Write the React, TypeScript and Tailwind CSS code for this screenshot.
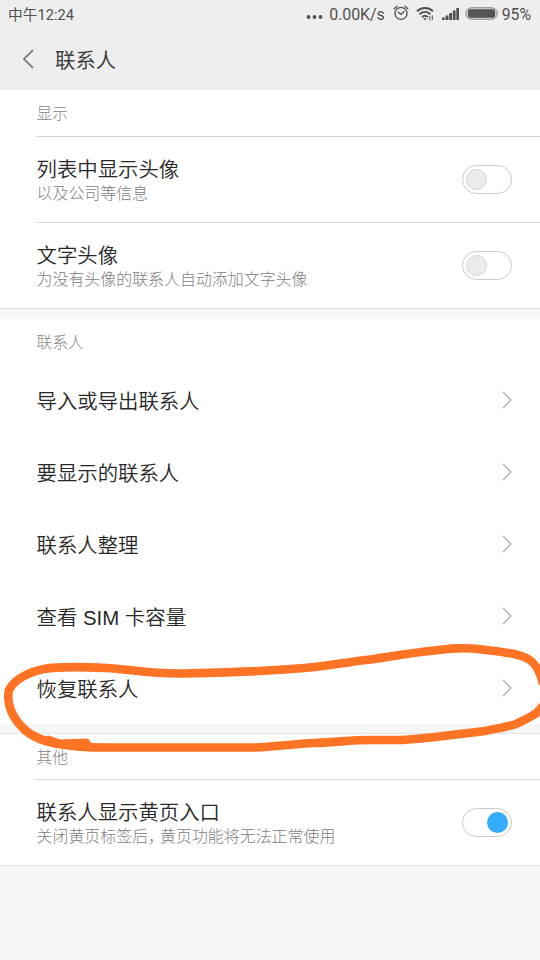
import { useState } from 'react';

const NAV_ITEMS = ['导入或导出联系人', '要显示的联系人', '联系人整理', '查看 SIM 卡容量', '恢复联系人'];

function StatusBar() {
  return (
    <div className="flex h-7 items-center justify-between pl-2 pr-[9px] text-[#505050]">
      <span className="pt-[2px] text-[14.7px] leading-7">中午12:24</span>
      <div className="flex items-center leading-7">
        <svg width="17" height="6" viewBox="0 0 17 6" className="mr-[6px] mt-[6px]" fill="currentColor">
          <circle cx="2.5" cy="3" r="1.9" />
          <circle cx="8.5" cy="3" r="1.9" />
          <circle cx="14.5" cy="3" r="1.9" />
        </svg>
        <span className="pt-[2px] text-[16px] tracking-[-0.1px]">0.00K/s</span>
        {/* Alarm */}
        <svg width="16" height="16" viewBox="0 0 16 16" className="ml-2 -mt-[2px]" fill="none" stroke="currentColor" strokeWidth="1.3" strokeLinecap="round">
          <circle cx="8" cy="8.4" r="6" />
          <path d="M1.2 3.8 4 1.3M14.8 3.8 12 1.3M5.2 7.2 8 9.4l3-2.8" />
        </svg>
        {/* Wifi */}
        <svg width="18" height="15" viewBox="0 0 18 15" className="ml-[7px] -mt-px" fill="none" stroke="currentColor" strokeWidth="1.9">
          <path d="M1 5.2C5.5 1 12.5 1 17 5.2M3.5 8.2C6.8 5.2 11.2 5.2 14.5 8.2M6 11c1.8-1.5 4.2-1.5 6 0" />
          <path d="m7 12.2 2 2 2-2Z" fill="currentColor" stroke="none" />
          <path d="M13.8 14.500V10M16.3 9.5V14" strokeWidth="1" />
        </svg>
        {/* Signal */}
        <svg width="17" height="12" viewBox="0 0 17 12" className="ml-2" fill="currentColor">
          <path d="M0 9.5h2.8V12H0zM3.6 7.5h2.8V12H3.6zM7.2 5H10v7H7.2zM10.8 2.5h2.8V12h-2.8zM14.3 0h2.7v12h-2.7z" />
        </svg>
        {/* Battery */}
        <svg width="33" height="13" viewBox="0 0 33 13" className="ml-[6px] -mt-px">
          <rect x="0.6" y="0.6" width="31.8" height="11.8" rx="5.9" fill="#c4c4c4" stroke="#9a9a9a" strokeWidth="1" />
          <path d="M5 2.2h23a2 2 0 0 1 2 2v4.6a2 2 0 0 1-2 2H5a2 2 0 0 1-2-2V4.2a2 2 0 0 1 2-2Z" fill="#555" />
        </svg>
        <span className="ml-1 pt-[2px] text-[15.8px]">95%</span>
      </div>
    </div>
  );
}

function SectionLabel({ children }: { children: string }) {
  return <h2 className="pl-[36.5px] pt-[2px] text-[15.7px] font-light leading-[44px] text-[#858585]">{children}</h2>;
}

function Chevron() {
  return (
    <svg width="10" height="18" viewBox="0 0 10 18" fill="none" stroke="#b0b0b0" strokeWidth="1.3">
      <path d="M1 1 9 9l-8 8" />
    </svg>
  );
}

type SwitchRowProps = {
  title: string;
  desc: React.ReactNode;
  initial?: boolean;
};

function SwitchRow({ title, desc, initial = false }: SwitchRowProps) {
  const [on, setOn] = useState(initial);
  return (
    <div className="ml-9 flex h-[86px] items-center justify-between border-t border-[#d6d6d6] pr-7">
      <div className="pl-[0.5px] pt-[3px]">
        <div className="text-[20.4px] font-[350] leading-[26px] text-[#282828]">{title}</div>
        <div className="text-[15.95px] font-light leading-[22px] text-[#808080]">{desc}</div>
      </div>
      <button
        role="switch"
        aria-checked={on}
        onClick={() => setOn(!on)}
        className={`flex h-[29px] w-[50px] items-center rounded-full border border-[#cacaca] px-[3px] ${on ? 'justify-end' : 'justify-start'}`}
      >
        <span className={`size-[21px] rounded-full ${on ? 'bg-[#33adfb]' : 'border border-[#d4d4d4] bg-[#ebebeb]'}`} />
      </button>
    </div>
  );
}

// Hand-drawn marker ring around the restore entry
function MarkerRing() {
  return (
    <svg width="540" height="120" viewBox="0 640 540 120" className="pointer-events-none absolute left-0 top-[640px]" fill="none">
      <path
        d="M543 684C540 670 533 660 524 657C511 652 496 651.5 482 649.5C465 647 450 648.5 430 651C405 653.5 380 659 354 661.5C330 665 315 668 291 669C263 671 230 673 182 673.5C150 674 128 669 106 668C85 667 60 666 44 669C28 672 14 680 9 690C6 703 12 717 22 727C32 738 46 742 62 744.5C75 747 90 747.5 105 747.5H255C275 747 292 744 315 743C340 742 350 740 370 740H402C430 738 460 734 485 731C499 728 507 727 516 724C528 718 539 714 543 705"
        stroke="#ff7424"
        strokeWidth="8.6"
        strokeLinejoin="round"
      />
      <path d="M42 737 49 735.5 60 739.5 88 738.5 93 745H50Z" fill="#ff7424" />
    </svg>
  );
}

export default function App() {
  return (
    <div className="relative h-[960px] w-[540px] overflow-hidden bg-[#f6f6f6] font-['Roboto','Noto_Sans_CJK_SC',sans-serif]">
      <header className="h-[90px] bg-[#eeeeee]">
        <StatusBar />
        <div className="flex h-[62px] items-center pl-[23px]">
          <svg width="11" height="20" viewBox="0 0 11 20" fill="none" stroke="#747474" strokeWidth="1.7">
            <path d="m10 1-9 9 9 9" />
          </svg>
          <h1 className="ml-[21px] pt-[3px] text-[20.4px] leading-7 text-[#404040]">联系人</h1>
        </div>
      </header>

      <section className="border-b border-[#dedede] bg-white">
        <SectionLabel>显示</SectionLabel>
        <SwitchRow title="列表中显示头像" desc="以及公司等信息" />
        <SwitchRow title="文字头像" desc="为没有头像的联系人自动添加文字头像" />
      </section>

      <section className="mt-[10px] bg-white">
        <h2 className="h-[45px] pl-[36.5px] pt-px text-[15.7px] font-light leading-[45px] text-[#858585]">联系人</h2>
        {NAV_ITEMS.map((item) => (
          <a key={item} href="#" className="flex h-[72px] items-center justify-between pl-[36.5px] pr-7">
            <span className="pt-[3px] font-['Liberation_Sans','Noto_Sans_CJK_SC',sans-serif] text-[20.4px] font-[350] leading-[30px] text-[#282828]">
              {item}
            </span>
            <Chevron />
          </a>
        ))}
      </section>

      <section className="mt-[9px] border-b border-[#e4e4e4] bg-white">
        <div className="-mb-px border-t border-[#e4e4e4]">
          <SectionLabel>其他</SectionLabel>
        </div>
        <SwitchRow
          title="联系人显示黄页入口"
          desc={<>关闭黄页标签后<span className="tracking-[-4px]">，</span>黄页功能将无法正常使用</>}
          initial
        />
      </section>

      <MarkerRing />
    </div>
  );
}
